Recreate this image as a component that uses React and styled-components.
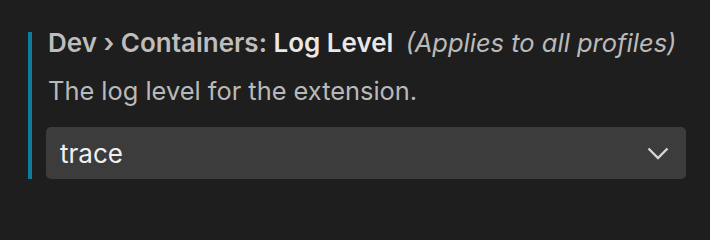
import React from 'react';
import styled, { createGlobalStyle } from 'styled-components';

const GlobalStyle = createGlobalStyle`
  html, body {
    margin: 0;
    padding: 0;
    background: #1e1e1e;
  }
  body {
    width: 710px;
    height: 206px;
    overflow: hidden;
    font-family: Inter, 'Noto Sans', sans-serif;
    -webkit-font-smoothing: antialiased;
  }
`;

const Page = styled.div`
  padding: 32px 24px 0 28px;
`;

const SettingItem = styled.div`
  display: flex;
  flex-direction: column;
  border-left: 4px solid #0c7d9d;
  padding-left: 14px;
`;

const Title = styled.div`
  padding-left: 2px;
  font-size: 26px;
  line-height: 22px;
  font-weight: 600;
  color: #bdbdbd;
  white-space: nowrap;
`;

const Label = styled.span`
  color: #e8e8e8;
`;

const Scope = styled.span`
  font-weight: 400;
  font-style: italic;
  color: #bababa;
  margin-left: 12px;
  font-size: 25.5px;
`;

const Description = styled.div`
  margin-top: 26px;
  padding-left: 2px;
  font-size: 25.4px;
  line-height: 22px;
  color: #b9b9b9;
`;

const Select = styled.div`
  margin-top: 25px;
  height: 52px;
  display: flex;
  align-items: center;
  justify-content: space-between;
  padding: 0 17px 0 14px;
  background: #3c3c3c;
  border-radius: 5px;
  color: #f0f0f0;
  font-size: 26px;
`;

const Chevron = () => (
  <svg width="22" height="13" viewBox="0 0 22 13" fill="none">
    <polyline points="1.5,1.5 11,11 20.5,1.5" stroke="#d4d4d4" strokeWidth="2.4" />
  </svg>
);

export default function App() {
  return (
    <>
      <GlobalStyle />
      <Page>
        <SettingItem>
          <Title>
            Dev › Containers: <Label>Log Level</Label>
            <Scope>(Applies to all profiles)</Scope>
          </Title>
          <Description>The log level for the extension.</Description>
          <Select>
            <span>trace</span>
            <Chevron />
          </Select>
        </SettingItem>
      </Page>
    </>
  );
}
